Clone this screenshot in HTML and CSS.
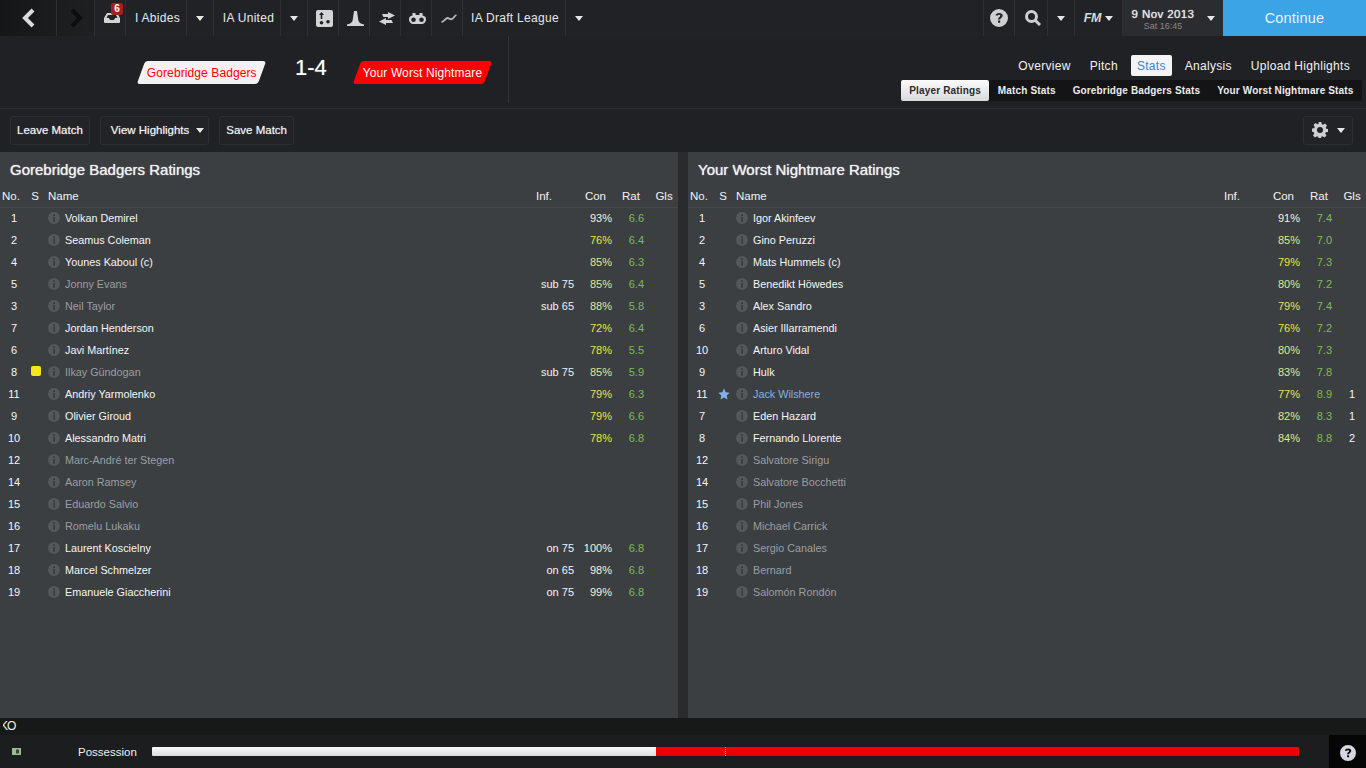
FILE: index.html
```html
<!DOCTYPE html>
<html lang="en">
<head>
    <meta charset="UTF-8">
    <title>Player Ratings</title>
    <link rel="stylesheet" href="styles.css">
</head>
<body>
<svg class="defs" width="0" height="0">
    <symbol id="i-info" viewBox="0 0 12 12"><path fill-rule="evenodd" d="M6 0a6 6 0 1 1 0 12A6 6 0 0 1 6 0zM5 2.200v1.700h2V2.200zM5 5v4.800h2V5z"/></symbol>
    <symbol id="i-caret" viewBox="0 0 8 5"><path d="M0 0h8L4 5z"/></symbol>
    <symbol id="i-help" viewBox="0 0 18 18"><path fill-rule="evenodd" d="M9 0a9 9 0 1 1 0 18A9 9 0 0 1 9 0zM5.500 6.500h2.300C8 5.500 10.300 5.500 10.300 6.800 10.300 8 8 8.200 8 10.500h2.200c0-1.500 2.500-2 2.500-4C12.700 3 5.800 3 5.500 6.500zM8 11.500v2.300h2.200v-2.300z"/></symbol>
</svg>

<nav class="topbar">
    <div class="nav-arrows">
        <div class="tb-cell w-back">
            <svg width="14" height="20" viewBox="0 0 14 20"><path d="M11 2 3 10l8 8" fill="none" stroke="#dcdcdc" stroke-width="4"/></svg>
        </div>
        <div class="tb-cell w-fwd">
            <svg width="14" height="20" viewBox="0 0 14 20"><path d="M3 2l8 8-8 8" fill="none" stroke="#0d0d0e" stroke-width="4"/></svg>
        </div>
    </div>
    <div class="tb-cell w-inbox inbox">
        <svg width="16" height="10" viewBox="0 0 16 10"><path fill-rule="evenodd" fill="#d4d4d4" d="M3 0h10l3 5v4a1 1 0 0 1-1 1H1a1 1 0 0 1-1-1V5zM4 2 2.500 5H5l1 2h4l1-2h2.500L12 2z"/></svg>
        <span class="badge">6</span>
    </div>
    <div class="tb-cell w-abides">I Abides</div>
    <div class="tb-cell w-caret"><svg class="caret"><use href="#i-caret"/></svg></div>
    <div class="tb-cell w-united">IA United</div>
    <div class="tb-cell w-caret"><svg class="caret"><use href="#i-caret"/></svg></div>
    <div class="tb-cell w-icon">
        <svg width="17" height="17" viewBox="0 0 17 17"><path fill-rule="evenodd" fill="#d4d4d4" d="M2 0h13a2 2 0 0 1 2 2v13a2 2 0 0 1-2 2H2a2 2 0 0 1-2-2V2a2 2 0 0 1 2-2zM5.500 2 3 5h1.700v4h1.600V5H8zM5.500 11a1.800 1.800 0 1 0 0 3.600 1.800 1.800 0 0 0 0-3.600zM12 10a1.800 1.800 0 1 0 0 3.600 1.800 1.800 0 0 0 0-3.600z"/></svg>
    </div>
    <div class="tb-cell w-icon">
        <svg width="17" height="15" viewBox="0 0 17 15"><path fill="#d4d4d4" d="M7 0h3l1.300 9c.3 2 1.700 3.500 5.700 4.500V15H0v-1.500C4 12.500 5.400 11 5.700 9z"/></svg>
    </div>
    <div class="tb-cell w-icon">
        <svg width="16" height="13" viewBox="0 0 16 13"><path fill="#d4d4d4" d="M9 0l7 3.500L9 7V5H4.500L3 2h6zM7 6v2h5.500L14 11H7v2L0 9.500z"/></svg>
    </div>
    <div class="tb-cell w-icon">
        <svg width="17" height="11" viewBox="0 0 17 11"><path fill-rule="evenodd" fill="#d4d4d4" d="M3.500 0h3v2h4V0h3v2.500A4 4 0 0 1 17 6.500 4.500 4.500 0 0 1 12.500 11h-8A4.500 4.500 0 0 1 0 6.500a4 4 0 0 1 3.500-4zM4.500 4.500a2.300 2.300 0 1 0 0 4.600 2.300 2.300 0 0 0 0-4.600zM12.500 4.500a2.300 2.300 0 1 0 0 4.600 2.300 2.300 0 0 0 0-4.600z"/></svg>
    </div>
    <div class="tb-cell w-icon">
        <svg width="16" height="9" viewBox="0 0 16 9"><path d="M.5 8C3 8 4.500 4 6.500 4S9 6 11 5s2.500-3.500 4.500-4" fill="none" stroke="#b8b8b8" stroke-width="1.800"/></svg>
    </div>
    <div class="tb-cell w-league">IA Draft League</div>
    <div class="tb-cell w-league-caret"><svg class="caret"><use href="#i-caret"/></svg></div>
    <div class="tb-spacer"></div>
    <div class="tb-cell w-help">
        <svg class="help-icon"><use href="#i-help"/></svg>
    </div>
    <div class="tb-cell w-search">
        <svg width="16" height="16" viewBox="0 0 16 16"><circle cx="6.500" cy="6.500" r="5" fill="none" stroke="#cfcfcf" stroke-width="3"/><path d="M10 10l5 5" stroke="#cfcfcf" stroke-width="3"/></svg>
    </div>
    <div class="tb-cell w-search-caret"><svg class="caret"><use href="#i-caret"/></svg></div>
    <div class="tb-cell w-fm"><span class="fm-logo">FM</span><svg class="caret"><use href="#i-caret"/></svg></div>
    <div class="tb-cell w-date">
        <div class="date-text">
            <div class="date-main">9 Nov 2013</div>
            <div class="date-sub">Sat 16:45</div>
        </div>
        <svg class="caret"><use href="#i-caret"/></svg>
    </div>
    <button class="continue">Continue</button>
</nav>

<header class="match-header">
    <div class="scoreline">
        <span class="team-tag team-home"><span>Gorebridge Badgers</span></span>
        <span class="score">1-4</span>
        <span class="team-tag team-away"><span>Your Worst Nightmare</span></span>
    </div>
    <div class="match-tabs">
        <div class="tabs-main">
            <a>Overview</a><a>Pitch</a><a class="active">Stats</a><a>Analysis</a><a>Upload Highlights</a>
        </div>
        <div class="tabs-sub">
            <a class="active">Player Ratings</a><a>Match Stats</a><a>Gorebridge Badgers Stats</a><a>Your Worst Nightmare Stats</a>
        </div>
    </div>
</header>

<div class="toolbar">
    <button class="btn">Leave Match</button>
    <button class="btn btn-menu">View Highlights<svg class="caret"><use href="#i-caret"/></svg></button>
    <button class="btn">Save Match</button>
    <button class="btn btn-gear">
        <svg width="16" height="16" viewBox="0 0 16 16"><path fill-rule="evenodd" fill="#cfcfcf" d="M6.600 0h2.800l.4 2.200 1.300.6 1.900-1.300 2 2-1.300 1.900.6 1.300 1.700.4v2.800l-2.200.4-.6 1.300 1.300 1.900-2 2-1.900-1.300-1.300.6-.4 2.200H6.600l-.4-2.200-1.300-.6L3 15.500l-2-2 1.300-1.900-.6-1.300L0 9.400V6.600l2.200-.4.600-1.300L1.500 3l2-2 1.900 1.300 1.300-.6zM8 5a3 3 0 1 0 0 6 3 3 0 0 0 0-6z"/></svg>
        <svg class="caret"><use href="#i-caret"/></svg>
    </button>
</div>

<main class="panels">
    <section class="panel">
        <h2>Gorebridge Badgers Ratings</h2>
        <table class="ratings">
            <thead><tr><th class="no">No.</th><th class="s">S</th><th class="name">Name</th><th class="inf">Inf.</th><th class="con">Con</th><th class="rat">Rat</th><th class="gls">Gls</th></tr></thead>
            <tbody>
                <tr><td class="no">1</td><td class="s"></td><td class="name"><svg class="info"><use href="#i-info"/></svg>Volkan Demirel</td><td class="inf"></td><td class="con c-hi">93%</td><td class="rat">6.6</td><td class="gls"></td></tr>
                <tr><td class="no">2</td><td class="s"></td><td class="name"><svg class="info"><use href="#i-info"/></svg>Seamus Coleman</td><td class="inf"></td><td class="con c-lo">76%</td><td class="rat">6.4</td><td class="gls"></td></tr>
                <tr><td class="no">4</td><td class="s"></td><td class="name"><svg class="info"><use href="#i-info"/></svg>Younes Kaboul (c)</td><td class="inf"></td><td class="con c-mid">85%</td><td class="rat">6.3</td><td class="gls"></td></tr>
                <tr class="off"><td class="no">5</td><td class="s"></td><td class="name"><svg class="info"><use href="#i-info"/></svg>Jonny Evans</td><td class="inf">sub 75</td><td class="con c-mid">85%</td><td class="rat">6.4</td><td class="gls"></td></tr>
                <tr class="off"><td class="no">3</td><td class="s"></td><td class="name"><svg class="info"><use href="#i-info"/></svg>Neil Taylor</td><td class="inf">sub 65</td><td class="con c-mid">88%</td><td class="rat">5.8</td><td class="gls"></td></tr>
                <tr><td class="no">7</td><td class="s"></td><td class="name"><svg class="info"><use href="#i-info"/></svg>Jordan Henderson</td><td class="inf"></td><td class="con c-lo">72%</td><td class="rat">6.4</td><td class="gls"></td></tr>
                <tr><td class="no">6</td><td class="s"></td><td class="name"><svg class="info"><use href="#i-info"/></svg>Javi Martínez</td><td class="inf"></td><td class="con c-lo">78%</td><td class="rat">5.5</td><td class="gls"></td></tr>
                <tr class="off"><td class="no">8</td><td class="s"><span class="card"></span></td><td class="name"><svg class="info"><use href="#i-info"/></svg>Ilkay Gündogan</td><td class="inf">sub 75</td><td class="con c-mid">85%</td><td class="rat">5.9</td><td class="gls"></td></tr>
                <tr><td class="no">11</td><td class="s"></td><td class="name"><svg class="info"><use href="#i-info"/></svg>Andriy Yarmolenko</td><td class="inf"></td><td class="con c-lo">79%</td><td class="rat">6.3</td><td class="gls"></td></tr>
                <tr><td class="no">9</td><td class="s"></td><td class="name"><svg class="info"><use href="#i-info"/></svg>Olivier Giroud</td><td class="inf"></td><td class="con c-lo">79%</td><td class="rat">6.6</td><td class="gls"></td></tr>
                <tr><td class="no">10</td><td class="s"></td><td class="name"><svg class="info"><use href="#i-info"/></svg>Alessandro Matri</td><td class="inf"></td><td class="con c-lo">78%</td><td class="rat">6.8</td><td class="gls"></td></tr>
                <tr class="off"><td class="no">12</td><td class="s"></td><td class="name"><svg class="info"><use href="#i-info"/></svg>Marc-André ter Stegen</td><td class="inf"></td><td class="con"></td><td class="rat"></td><td class="gls"></td></tr>
                <tr class="off"><td class="no">14</td><td class="s"></td><td class="name"><svg class="info"><use href="#i-info"/></svg>Aaron Ramsey</td><td class="inf"></td><td class="con"></td><td class="rat"></td><td class="gls"></td></tr>
                <tr class="off"><td class="no">15</td><td class="s"></td><td class="name"><svg class="info"><use href="#i-info"/></svg>Eduardo Salvio</td><td class="inf"></td><td class="con"></td><td class="rat"></td><td class="gls"></td></tr>
                <tr class="off"><td class="no">16</td><td class="s"></td><td class="name"><svg class="info"><use href="#i-info"/></svg>Romelu Lukaku</td><td class="inf"></td><td class="con"></td><td class="rat"></td><td class="gls"></td></tr>
                <tr><td class="no">17</td><td class="s"></td><td class="name"><svg class="info"><use href="#i-info"/></svg>Laurent Koscielny</td><td class="inf">on 75</td><td class="con c-hi">100%</td><td class="rat">6.8</td><td class="gls"></td></tr>
                <tr><td class="no">18</td><td class="s"></td><td class="name"><svg class="info"><use href="#i-info"/></svg>Marcel Schmelzer</td><td class="inf">on 65</td><td class="con c-hi">98%</td><td class="rat">6.8</td><td class="gls"></td></tr>
                <tr><td class="no">19</td><td class="s"></td><td class="name"><svg class="info"><use href="#i-info"/></svg>Emanuele Giaccherini</td><td class="inf">on 75</td><td class="con c-hi">99%</td><td class="rat">6.8</td><td class="gls"></td></tr>
            </tbody>
        </table>
    </section>
    <section class="panel">
        <h2>Your Worst Nightmare Ratings</h2>
        <table class="ratings">
            <thead><tr><th class="no">No.</th><th class="s">S</th><th class="name">Name</th><th class="inf">Inf.</th><th class="con">Con</th><th class="rat">Rat</th><th class="gls">Gls</th></tr></thead>
            <tbody>
                <tr><td class="no">1</td><td class="s"></td><td class="name"><svg class="info"><use href="#i-info"/></svg>Igor Akinfeev</td><td class="inf"></td><td class="con c-hi">91%</td><td class="rat">7.4</td><td class="gls"></td></tr>
                <tr><td class="no">2</td><td class="s"></td><td class="name"><svg class="info"><use href="#i-info"/></svg>Gino Peruzzi</td><td class="inf"></td><td class="con c-mid">85%</td><td class="rat">7.0</td><td class="gls"></td></tr>
                <tr><td class="no">4</td><td class="s"></td><td class="name"><svg class="info"><use href="#i-info"/></svg>Mats Hummels (c)</td><td class="inf"></td><td class="con c-lo">79%</td><td class="rat">7.3</td><td class="gls"></td></tr>
                <tr><td class="no">5</td><td class="s"></td><td class="name"><svg class="info"><use href="#i-info"/></svg>Benedikt Höwedes</td><td class="inf"></td><td class="con c-mid">80%</td><td class="rat">7.2</td><td class="gls"></td></tr>
                <tr><td class="no">3</td><td class="s"></td><td class="name"><svg class="info"><use href="#i-info"/></svg>Alex Sandro</td><td class="inf"></td><td class="con c-lo">79%</td><td class="rat">7.4</td><td class="gls"></td></tr>
                <tr><td class="no">6</td><td class="s"></td><td class="name"><svg class="info"><use href="#i-info"/></svg>Asier Illarramendi</td><td class="inf"></td><td class="con c-lo">76%</td><td class="rat">7.2</td><td class="gls"></td></tr>
                <tr><td class="no">10</td><td class="s"></td><td class="name"><svg class="info"><use href="#i-info"/></svg>Arturo Vidal</td><td class="inf"></td><td class="con c-mid">80%</td><td class="rat">7.3</td><td class="gls"></td></tr>
                <tr><td class="no">9</td><td class="s"></td><td class="name"><svg class="info"><use href="#i-info"/></svg>Hulk</td><td class="inf"></td><td class="con c-mid">83%</td><td class="rat">7.8</td><td class="gls"></td></tr>
                <tr class="motm"><td class="no">11</td><td class="s"><svg class="star" viewBox="0 0 12 12"><path d="M6 .5l1.700 3.700 4 .5-3 2.700.8 4L6 9.500l-3.500 1.900.8-4-3-2.700 4-.5z"/></svg></td><td class="name"><svg class="info"><use href="#i-info"/></svg>Jack Wilshere</td><td class="inf"></td><td class="con c-lo">77%</td><td class="rat">8.9</td><td class="gls">1</td></tr>
                <tr><td class="no">7</td><td class="s"></td><td class="name"><svg class="info"><use href="#i-info"/></svg>Eden Hazard</td><td class="inf"></td><td class="con c-mid">82%</td><td class="rat">8.3</td><td class="gls">1</td></tr>
                <tr><td class="no">8</td><td class="s"></td><td class="name"><svg class="info"><use href="#i-info"/></svg>Fernando Llorente</td><td class="inf"></td><td class="con c-mid">84%</td><td class="rat">8.8</td><td class="gls">2</td></tr>
                <tr class="off"><td class="no">12</td><td class="s"></td><td class="name"><svg class="info"><use href="#i-info"/></svg>Salvatore Sirigu</td><td class="inf"></td><td class="con"></td><td class="rat"></td><td class="gls"></td></tr>
                <tr class="off"><td class="no">14</td><td class="s"></td><td class="name"><svg class="info"><use href="#i-info"/></svg>Salvatore Bocchetti</td><td class="inf"></td><td class="con"></td><td class="rat"></td><td class="gls"></td></tr>
                <tr class="off"><td class="no">15</td><td class="s"></td><td class="name"><svg class="info"><use href="#i-info"/></svg>Phil Jones</td><td class="inf"></td><td class="con"></td><td class="rat"></td><td class="gls"></td></tr>
                <tr class="off"><td class="no">16</td><td class="s"></td><td class="name"><svg class="info"><use href="#i-info"/></svg>Michael Carrick</td><td class="inf"></td><td class="con"></td><td class="rat"></td><td class="gls"></td></tr>
                <tr class="off"><td class="no">17</td><td class="s"></td><td class="name"><svg class="info"><use href="#i-info"/></svg>Sergio Canales</td><td class="inf"></td><td class="con"></td><td class="rat"></td><td class="gls"></td></tr>
                <tr class="off"><td class="no">18</td><td class="s"></td><td class="name"><svg class="info"><use href="#i-info"/></svg>Bernard</td><td class="inf"></td><td class="con"></td><td class="rat"></td><td class="gls"></td></tr>
                <tr class="off"><td class="no">19</td><td class="s"></td><td class="name"><svg class="info"><use href="#i-info"/></svg>Salomón Rondón</td><td class="inf"></td><td class="con"></td><td class="rat"></td><td class="gls"></td></tr>
            </tbody>
        </table>
    </section>
</main>

<div class="ticker">KO</div>

<footer class="possession">
    <svg class="pos-icon" width="9" height="7" viewBox="0 0 9 7"><path fill="#9dbb8f" d="M0 0h9v7H0z"/><path fill="#3a4636" d="M4 1.500h3v4H4z"/></svg>
    <span class="pos-label">Possession</span>
    <div class="pos-bar">
        <div class="pos-home" style="width: 43.9%"></div>
        <div class="pos-away"></div>
        <span class="pos-tick"></span>
    </div>
    <div class="pos-help">
        <svg class="help-icon"><use href="#i-help"/></svg>
    </div>
</footer>
</body>
</html>
```

FILE: styles.css
```css
* {
    box-sizing: border-box;
}
body {
    margin: 0;
    width: 1366px;
    height: 768px;
    overflow: hidden;
    display: flex;
    flex-direction: column;
    background-color: #202124;
    color: #fff;
    font-family: "Liberation Sans", Arial, sans-serif;
    font-size: 11px;
}
.defs {
    position: absolute;
}
.caret {
    width: 8px;
    height: 5px;
    fill: #e6e6e6;
    flex: none;
}
.help-icon {
    width: 18px;
    height: 18px;
    fill: #cfcfcf;
}

/* top bar */
.topbar {
    display: flex;
    height: 36px;
    flex: none;
    background-color: #212225;
    font-size: 12px;
    letter-spacing: 0.3px;
}
.nav-arrows {
    display: flex;
    background: linear-gradient(to right, #151617, #1f2022);
}
.tb-cell {
    display: flex;
    align-items: center;
    justify-content: center;
    flex: none;
    border-right: 1px solid #2f3033;
    color: #e8e8e8;
}
.tb-spacer {
    flex: 1;
    border-right: 1px solid #2f3033;
}
.w-back { width: 57px; padding-left: 1px; }
.w-fwd { width: 38px; }
.w-inbox { width: 31px; padding-left: 3px; }
.w-abides { width: 61px; padding-left: 3px; }
.w-caret { width: 27px; }
.w-united { width: 67px; padding-left: 3px; }
.w-icon { width: 31px; padding-left: 3px; }
.w-league { width: 103px; padding-left: 2px; }
.w-league-caret { width: 26px; border-right: none; }
.w-help { width: 31px; }
.w-search { width: 33px; padding-left: 3px; }
.w-search-caret { width: 27px; }
.w-fm { width: 48px; gap: 4px; }
.w-date {
    width: 100px;
    justify-content: flex-start;
    gap: 12px;
    padding-left: 8px;
    background-color: #2b2c2f;
    border-right: none;
}
.inbox {
    position: relative;
}
.inbox svg {
    align-self: flex-start;
    margin-top: 13px;
}
.badge {
    position: absolute;
    top: 3px;
    left: 16px;
    width: 12px;
    height: 12px;
    border-radius: 2px;
    background-color: #a81f1c;
    color: #fff;
    font-size: 10px;
    font-weight: bold;
    letter-spacing: 0;
    line-height: 12px;
    text-align: center;
}
.fm-logo {
    color: #d8d8d8;
    font-size: 12.5px;
    font-weight: bold;
    font-style: italic;
    letter-spacing: -0.3px;
}
.date-text {
    width: 64px;
    margin-top: 4px;
    text-align: center;
    white-space: nowrap;
}
.date-main {
    font-size: 11.5px;
    line-height: 13px;
    letter-spacing: 0.4px;
    text-shadow: 0 0 1px #e8e8e8;
}
.date-sub {
    color: #85878a;
    font-size: 9px;
    line-height: 11px;
    letter-spacing: 0;
}
.continue {
    width: 143px;
    border: none;
    background-color: #3aa4e6;
    color: #e8f4fc;
    font-family: inherit;
    font-size: 14.5px;
    letter-spacing: 0.2px;
}

/* match header */
.match-header {
    display: flex;
    justify-content: space-between;
    height: 73px;
    flex: none;
    border-bottom: 1px solid #2e2f31;
}
.scoreline {
    display: flex;
    align-items: flex-start;
    width: 509px;
    height: 67px;
    padding: 25px 0 0 141px;
    border-right: 1px solid #333437;
}
.team-tag {
    display: flex;
    align-items: center;
    justify-content: center;
    height: 23px;
    flex: none;
    border-radius: 3px;
    transform: skewX(-20deg);
    font-size: 12px;
    letter-spacing: 0.1px;
}
.team-tag span {
    transform: skewX(20deg);
    white-space: nowrap;
}
.team-home {
    width: 121px;
    background-color: #f2f2f2;
    color: #f00;
}
.team-away {
    width: 131px;
    background-color: #f00;
    color: #fff;
}
.score {
    width: 95px;
    margin-top: -3px;
    padding-left: 33px;
    flex: none;
    font-size: 22px;
    line-height: 20px;
    white-space: nowrap;
    text-shadow: 0 0 1px #999;
}
.match-tabs {
    display: flex;
    flex-direction: column;
    align-items: flex-end;
    padding: 19px 4px 0 0;
}
.tabs-main {
    display: flex;
    height: 21px;
    margin-right: 6px;
    font-size: 12px;
    letter-spacing: 0.3px;
}
.tabs-main a {
    display: flex;
    align-items: center;
    margin-left: 7px;
    padding: 0 6px;
    border-radius: 2px;
    color: #f2f2f2;
}
.tabs-main a.active {
    background-color: #f4f4f4;
    color: #3f7fd1;
}
.tabs-sub {
    display: flex;
    height: 21px;
    margin-top: 4px;
    border-radius: 2px;
    background-color: #141417;
    font-size: 10px;
    font-weight: bold;
    letter-spacing: 0.15px;
}
.tabs-sub a {
    display: flex;
    align-items: center;
    padding: 0 8.5px;
    color: #ececec;
}
.tabs-sub a.active {
    border-radius: 2px;
    background: linear-gradient(#fbfbfb, #d9dadc);
    color: #2b2b2b;
}

/* toolbar */
.toolbar {
    display: flex;
    gap: 10px;
    height: 43px;
    flex: none;
    padding: 7px 13px 0 10px;
}
.btn {
    display: flex;
    align-items: center;
    justify-content: center;
    gap: 7px;
    height: 29px;
    padding: 0 6px 1px;
    border: 1px solid #2d2e31;
    border-radius: 3px;
    background-color: #222326;
    color: #f0f0f0;
    font-family: inherit;
    font-size: 11.5px;
    text-shadow: 0 0 1px #a8a8a8;
}
.btn-menu {
    padding: 0 4px 1px 10px;
}
.btn-gear {
    width: 50px;
    margin-left: auto;
    gap: 9px;
}

/* rating panels */
.panels {
    display: flex;
    gap: 10px;
    flex: 1;
    min-height: 0;
    background-color: #2a2b2d;
}
.panel {
    flex: 1;
    background-color: #3c3f42;
}
.panel h2 {
    height: 33px;
    margin: 0;
    padding: 9px 10px 0;
    color: #f0f0f0;
    font-size: 15px;
    font-weight: normal;
    line-height: 18px;
    text-shadow: 0 0 1px #f0f0f0;
}
.ratings {
    width: 678px;
    table-layout: fixed;
    border-collapse: collapse;
}
.ratings th {
    height: 22px;
    border-bottom: 1px solid #44474a;
    font-size: 11.5px;
    font-weight: normal;
    color: #f2f2f2;
}
.ratings td {
    height: 22px;
    padding: 0;
    color: #f5f5f5;
}
.ratings .no { width: 28px; text-align: center; }
.ratings th.no { padding: 0 0 0 2px; text-align: left; }
.ratings .s { width: 16px; padding: 0; text-align: center; }
.ratings th.s { padding: 0 2px 0 0; }
.ratings .name { width: 486px; padding: 0 0 0 4px; text-align: left; white-space: nowrap; }
.ratings td.name { font-size: 10.8px; }
.ratings .inf { width: 48px; padding: 0 4px 0 0; text-align: right; }
.ratings th.inf { padding: 0 0 0 6px; text-align: left; }
.ratings .con { width: 38px; padding: 0 4px 0 0; text-align: right; }
.ratings th.con { padding: 0 10px 0 0; }
.ratings .rat { width: 34px; padding: 0 6px 0 0; text-align: right; color: #7fbb4e; }
.ratings th.rat { padding: 0 0 0 6px; text-align: left; color: #f2f2f2; }
.ratings .gls { width: 28px; text-align: center; }
.info {
    width: 12px;
    height: 12px;
    margin-right: 5px;
    fill: #54575b;
    vertical-align: -2px;
}
.card {
    display: block;
    width: 10px;
    height: 10px;
    margin: -2px 0 0 3px;
    border-radius: 2px;
    background-color: #f5e61a;
}
.star {
    display: block;
    width: 12px;
    height: 12px;
    margin: 0 auto;
    fill: #7fb2e5;
}
.ratings td.c-hi { color: #f0f4d8; }
.ratings td.c-mid { color: #dde88e; }
.ratings td.c-lo { color: #e8e24a; }
.ratings .off td.name { color: #9b9ea1; }
.ratings .off td.inf { color: #f0f0f0; }
.ratings .motm td.name { color: #7fb2e5; }

/* ticker and possession */
.ticker {
    position: relative;
    height: 17px;
    flex: none;
    background-color: #171818;
    color: #f0f0f0;
    font-size: 12px;
    line-height: 17px;
    letter-spacing: -1px;
}
.ticker::before {
    content: "";
    position: absolute;
    left: 0;
    top: 0;
    width: 3px;
    height: 17px;
    background-color: #171818;
}
.possession {
    display: flex;
    align-items: center;
    height: 33px;
    flex: none;
    background-color: #1c1d1f;
}
.pos-icon {
    margin: 0 0 0 12px;
}
.pos-label {
    width: 74px;
    margin-left: 57px;
    color: #f0f0f0;
    font-size: 11.5px;
}
.pos-bar {
    display: flex;
    position: relative;
    width: 1147px;
    height: 9px;
    margin-top: -1px;
}
.pos-home {
    background: linear-gradient(#fafafa, #dcdcdc);
    border-radius: 1px 0 0 1px;
}
.pos-away {
    flex: 1;
    background: linear-gradient(#f50000, #e40000);
    border-radius: 0 1px 1px 0;
}
.pos-tick {
    position: absolute;
    top: 0;
    left: 573px;
    height: 9px;
    border-left: 1px dotted #d88;
}
.pos-help {
    display: flex;
    align-items: center;
    justify-content: center;
    width: 37px;
    height: 33px;
    margin-left: auto;
    background-color: #060606;
}
.pos-help .help-icon {
    width: 16px;
    height: 16px;
    margin-top: 3px;
    fill: #d3d8e2;
}
```
